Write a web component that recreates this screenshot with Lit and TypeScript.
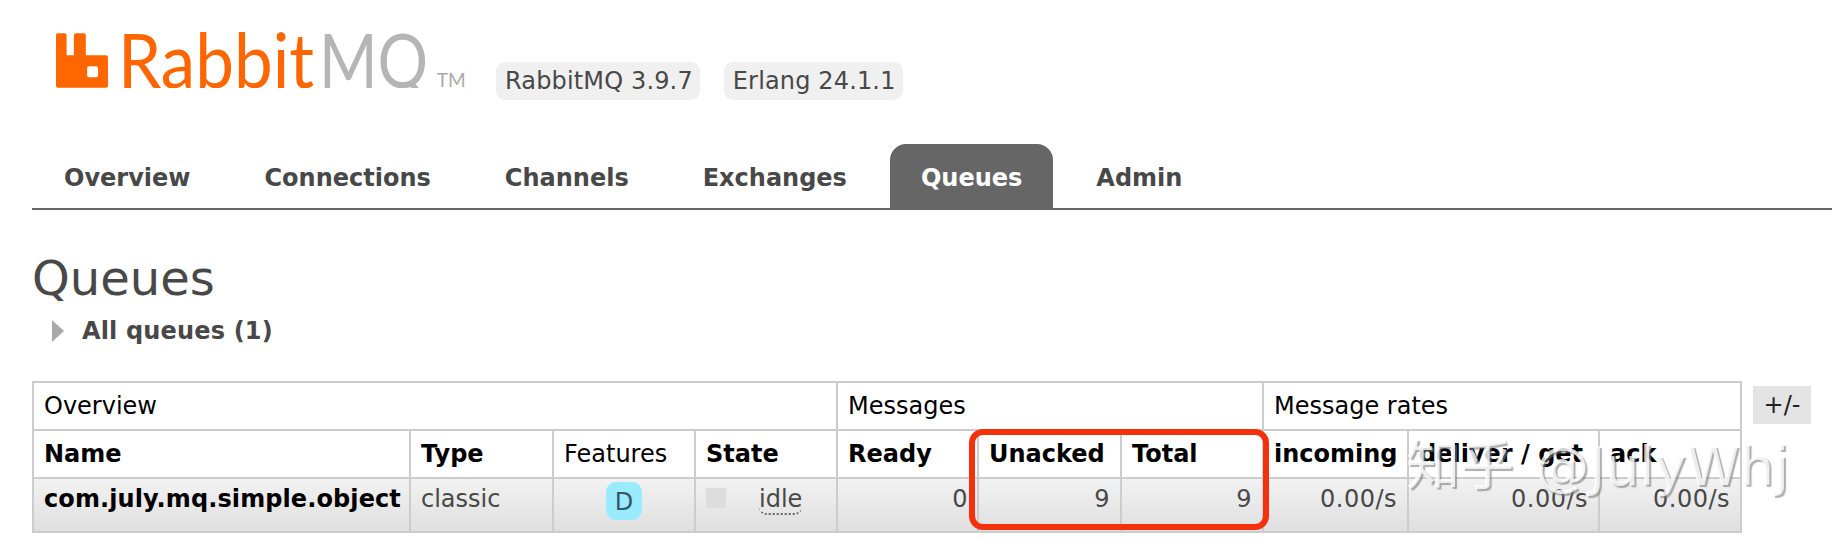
import { LitElement, css, html } from 'lit';
import { customElement } from 'lit/decorators.js';

const TABS = ['Overview', 'Connections', 'Channels', 'Exchanges', 'Queues', 'Admin'];
const WIDTHS = [377, 143, 142, 142, 141, 143, 142, 145, 191, 142];

@customElement('app-root')
export class AppRoot extends LitElement {
  static styles = css`
    :host {
      display: block;
      position: relative;
      height: 548px;
      overflow: hidden;
      background: #fff;
      color: #484848;
      font-family: 'DejaVu Sans', Verdana, sans-serif;
      font-size: 24px;
    }

    .header {
      display: flex;
      align-items: flex-start;
      height: 144px;
      padding-left: 56px;
      box-sizing: border-box;
    }

    .logo {
      display: flex;
      align-items: flex-start;
      width: 440px;
      padding-top: 33px;
    }

    .logo svg {
      width: 52px;
      height: 55px;
      flex: none;
    }

    .wordmark {
      display: flex;
      height: 57px;
      margin: -2px 0 0 10px;
      /* the logo's Q has a flat tail on the baseline */
      clip-path: inset(0 -60px 0 0);
      font-family: Lato, sans-serif;
      font-size: 76px;
      line-height: 55px;
      white-space: nowrap;
    }

    .wordmark span {
      display: block;
      flex: none;
      transform-origin: left center;
    }

    .wordmark .rabbit {
      margin-right: -14px;
      color: #f60;
      transform: scaleX(0.91);
    }

    .wordmark .mq {
      margin-right: -22px;
      color: #b5b5b5;
      transform: scaleX(0.83);
    }

    .wordmark .tm {
      margin-left: 8px;
      padding-top: 39px;
      font-size: 19px;
      line-height: 20px;
      color: #aaa;
    }

    .pills {
      display: flex;
      gap: 24px;
      padding-top: 62px;
    }

    .pill {
      height: 38px;
      line-height: 38px;
      padding: 0 7px 0 9px;
      border-radius: 9px;
      background: #f0f0f0;
      letter-spacing: 0.15px;
      white-space: nowrap;
    }

    nav {
      display: flex;
      gap: 12px;
      height: 64px;
      margin-left: 32px;
      padding-left: 1px;
      border-bottom: 2px solid #666;
    }

    nav a {
      height: 64px;
      line-height: 68px;
      padding: 0 31px;
      font-weight: 700;
      white-space: nowrap;
    }

    nav a.active {
      background: #666;
      color: #fff;
      border-radius: 16px 16px 0 0;
    }

    h1 {
      margin: 0;
      padding: 36px 0 0 32px;
      height: 65px;
      font-size: 48px;
      line-height: 65px;
      font-weight: 400;
    }

    .section {
      display: flex;
      align-items: center;
      gap: 18px;
      height: 40px;
      margin-left: 52px;
      font-weight: 700;
      letter-spacing: 0.16px;
    }

    .arrow {
      width: 0;
      height: 0;
      border-left: 12px solid #a8a8a8;
      border-top: 11px solid transparent;
      border-bottom: 11px solid transparent;
    }

    .table-row {
      display: flex;
      align-items: flex-start;
      margin: 30px 0 0 32px;
    }

    table {
      border-collapse: collapse;
      table-layout: fixed;
      width: 1708px;
      flex: none;
    }

    th,
    td {
      box-sizing: border-box;
      border: 2px solid #ccc;
      padding: 0 10px;
      text-align: left;
      font-weight: 400;
      line-height: 28px;
      white-space: nowrap;
      overflow: hidden;
    }

    thead th {
      height: 48px;
      color: #000;
    }

    thead th.strong {
      font-weight: 700;
    }

    tbody td {
      height: 54px;
      padding-top: 6px;
      vertical-align: top;
      background: linear-gradient(#f2f2f2, #dfdfdf);
    }

    tbody td.name {
      font-weight: 700;
      color: #000;
      letter-spacing: 0.1px;
    }

    td.num {
      text-align: right;
      letter-spacing: 0.5px;
    }

    td.first-num {
      padding-right: 9px;
    }

    td.center {
      padding-top: 3px;
      text-align: center;
    }

    .badge {
      display: inline-block;
      width: 36px;
      height: 38px;
      line-height: 40px;
      border-radius: 10px;
      background: #99ebff;
      color: #356;
      text-align: center;
    }

    .state {
      display: flex;
      align-items: flex-start;
    }

    .state i {
      width: 20px;
      height: 20px;
      margin: 3px 33px 0 0;
      background: #ddd;
    }

    .state span {
      border-bottom: 2px dotted #666;
      border-radius: 0 0 8px 8px;
      line-height: 28px;
    }

    .toggle {
      margin: 5px 0 0 11px;
      width: 58px;
      height: 38px;
      line-height: 38px;
      background: #e4e4e4;
      text-align: center;
      color: #222;
    }

    .highlight {
      position: absolute;
      left: 969px;
      top: 429px;
      width: 300px;
      height: 101px;
      box-sizing: border-box;
      border: 6px solid #f5300d;
      border-radius: 14px;
    }

    .watermark {
      position: absolute;
      left: 1406px;
      top: 432px;
      font-family: 'DejaVu Sans', 'Noto Sans CJK SC', sans-serif;
      font-size: 54px;
      line-height: 70px;
      word-spacing: 4px;
      white-space: nowrap;
      color: rgba(255, 255, 255, 0.8);
      text-shadow: 2px 2px 1px rgba(120, 120, 120, 0.6);
    }
  `;

  render() {
    return html`
      <div class="header">
        <div class="logo">
          <svg viewBox="78 70 157 165" aria-hidden="true">
            <path
              fill="#f60"
              fill-rule="evenodd"
              d="M84 70h20a6 6 0 0 1 6 6v61h22V76a6 6 0 0 1 6-6h24a6 6 0 0 1 6 6v61h61a6 6 0 0 1 6 6v86a6 6 0 0 1-6 6H84a6 6 0 0 1-6-6V76a6 6 0 0 1 6-6zM178 170a6 6 0 0 0-6 6v21a6 6 0 0 0 6 6h21a6 6 0 0 0 6-6v-21a6 6 0 0 0-6-6z"
            />
          </svg>
          <div class="wordmark">
            <span class="rabbit">Rabbit</span>
            <span class="mq">MQ</span>
            <span class="tm">TM</span>
          </div>
        </div>
        <div class="pills">
          <span class="pill">RabbitMQ 3.9.7</span>
          <span class="pill">Erlang 24.1.1</span>
        </div>
      </div>

      <nav>
        ${TABS.map((t) => html`<a class=${t === 'Queues' ? 'active' : ''}>${t}</a>`)}
      </nav>

      <h1>Queues</h1>
      <div class="section"><span class="arrow"></span>All queues (1)</div>

      <div class="table-row">
        <table>
          <colgroup>
            ${WIDTHS.map((w) => html`<col style="width:${w}px" />`)}
          </colgroup>
          <thead>
            <tr>
              <th colspan="4">Overview</th>
              <th colspan="3">Messages</th>
              <th colspan="3">Message rates</th>
            </tr>
            <tr>
              <th class="strong">Name</th>
              <th class="strong">Type</th>
              <th>Features</th>
              <th class="strong">State</th>
              <th class="strong">Ready</th>
              <th class="strong">Unacked</th>
              <th class="strong">Total</th>
              <th class="strong">incoming</th>
              <th class="strong">deliver / get</th>
              <th class="strong">ack</th>
            </tr>
          </thead>
          <tbody>
            <tr>
              <td class="name">com.july.mq.simple.object</td>
              <td>classic</td>
              <td class="center"><span class="badge">D</span></td>
              <td><div class="state"><i></i><span>idle</span></div></td>
              <td class="num first-num">0</td>
              <td class="num">9</td>
              <td class="num">9</td>
              <td class="num">0.00/s</td>
              <td class="num">0.00/s</td>
              <td class="num">0.00/s</td>
            </tr>
          </tbody>
        </table>
        <div class="toggle">+/-</div>
      </div>

      <div class="highlight"></div>
      <div class="watermark">知乎 @JulyWhj</div>
    `;
  }
}
